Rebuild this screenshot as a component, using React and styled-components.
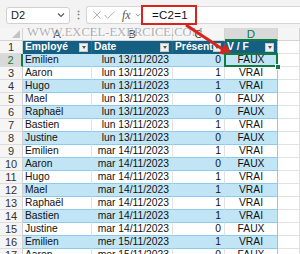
import React from 'react';
import styled, { createGlobalStyle } from 'styled-components';

const Global = createGlobalStyle`
  html, body { margin: 0; padding: 0; background: #fff; overflow: hidden; }
  #root { width: 300px; height: 254px; }
`;

const Frame = styled.div`
  position: relative;
  width: 300px;
  height: 254px;
  overflow: hidden;
  background: #fff;
  font-family: "Liberation Sans", Arial, sans-serif;
`;

const Bar = styled.div`
  display: flex;
  align-items: center;
  box-sizing: border-box;
  height: 28px;
  padding: 2px 0 0 6px;
  background: #f3f3f3;
`;

const NameBox = styled.div`
  box-sizing: border-box;
  width: 64px;
  height: 17px;
  display: flex;
  align-items: center;
  justify-content: space-between;
  padding: 0 4px 0 4px;
  background: #fff;
  border: 1px solid #d0d0d0;
  border-radius: 3px;
  font-size: 11px;
  color: #222;
`;

const Dots = styled.div`
  width: 16px;
  text-align: center;
  color: #7a7a7a;
  font-size: 11px;
  line-height: 11px;
  font-weight: bold;
`;

const FormulaBox = styled.div`
  flex: 1;
  box-sizing: border-box;
  height: 18px;
  display: flex;
  align-items: center;
  padding-left: 5px;
  background: #fff;
  border: 1px solid #d6d6d6;
  border-right: none;
  border-radius: 3px 0 0 3px;
`;

const IconSlot = styled.span`
  display: inline-flex;
  align-items: center;
  justify-content: center;
  width: ${p => p.$w}px;
`;

const Fx = styled.span`
  font-family: "Liberation Serif", "Times New Roman", serif;
  font-style: italic;
  font-size: 12px;
  color: #555;
  width: 12px;
`;

const FormulaText = styled.span`
  margin-left: 11px;
  font-size: 11.5px;
  color: #111;
  letter-spacing: 0.3px;
`;

const Sheet = styled.div`
  display: grid;
  grid-template-columns: 23px 69px 81px 52px 53px 22px;
  grid-auto-rows: 13px;
`;

const Corner = styled.div`
  position: relative;
  box-sizing: border-box;
  background: #f5f5f5;
  border-right: 1px solid #d4d4d4;
  border-bottom: 1px solid #d4d4d4;
  &::after {
    content: '';
    position: absolute;
    right: 2px;
    bottom: 2px;
    border-style: solid;
    border-width: 0 0 8px 8px;
    border-color: transparent transparent #c4c4c4 transparent;
  }
`;

const ColHead = styled.div`
  box-sizing: border-box;
  display: flex;
  align-items: center;
  justify-content: center;
  background: ${p => (p.$sel ? '#d9d9d9' : '#f5f5f5')};
  border-right: 1px solid #d4d4d4;
  border-bottom: ${p => (p.$sel ? '2px solid #107c41' : '1px solid #d4d4d4')};
  color: ${p => (p.$sel ? '#107c41' : '#444')};
  font-size: 11.5px;
  line-height: 12px;
`;

const RowHead = styled.div`
  box-sizing: border-box;
  display: flex;
  align-items: center;
  justify-content: center;
  background: ${p => (p.$sel ? '#d9d9d9' : '#f5f5f5')};
  border-right: ${p => (p.$sel ? '2px solid #107c41' : '1px solid #d0d0d0')};
  border-bottom: 1px solid #dcdcdc;
  color: ${p => (p.$sel ? '#107c41' : '#333')};
  font-size: 11px;
  line-height: 12px;
`;

const HeadCell = styled.div`
  box-sizing: border-box;
  display: flex;
  align-items: center;
  justify-content: space-between;
  padding: 0 3px 0 2px;
  background: #156082;
  border-right: 1px solid ${p => (p.$edge ? '#8ccbeb' : '#2a6f90')};
  border-bottom: 1px solid #156082;
  color: #fff;
  font-weight: bold;
  font-size: 10.3px;
  line-height: 12px;
  white-space: nowrap;
`;

const FilterBtn = styled.span`
  box-sizing: border-box;
  width: 9px;
  height: 9px;
  display: inline-flex;
  align-items: center;
  justify-content: center;
  background: #f0f0f0;
  border: 1px solid #c8c8c8;
  &::after {
    content: '';
    border-style: solid;
    border-width: 3px 2.5px 0 2.5px;
    border-color: #555 transparent transparent transparent;
  }
`;

const Cell = styled.div`
  position: relative;
  box-sizing: border-box;
  display: flex;
  align-items: center;
  justify-content: ${p =>
    p.$align === 'right' ? 'flex-end' : p.$align === 'center' ? 'center' : 'flex-start'};
  padding: 0 ${p => (p.$align === 'right' ? '3px' : '2px')} 0 2px;
  background: ${p => (p.$band ? '#c2e5f5' : '#fff')};
  border-bottom: 1px solid #8ccbeb;
  border-right: 1px solid
    ${p => (p.$edge ? '#8ccbeb' : p.$band ? '#c2e5f5' : '#e2e2e2')};
  color: #111;
  font-size: 10.3px;
  line-height: 12px;
  white-space: nowrap;
  z-index: ${p => (p.$sel ? 2 : 'auto')};
  ${p =>
    p.$sel &&
    `
    &::before {
      content: '';
      position: absolute;
      left: -1px; top: -1px; right: -1px; bottom: -1px;
      border: 2px solid #107c41;
    }
    &::after {
      content: '';
      position: absolute;
      right: -4px; bottom: -4px;
      width: 4px; height: 4px;
      background: #107c41;
      border: 1px solid #fff;
    }
  `}
`;

const EmptyCell = styled.div`
  box-sizing: border-box;
  background: #fff;
  border-bottom: 1px solid #e2e2e2;
  border-right: 1px solid #e2e2e2;
`;

const Watermark = styled.div`
  position: absolute;
  left: 27px;
  top: 26px;
  font-family: "Liberation Serif", "Times New Roman", serif;
  font-size: 12.6px;
  line-height: 13px;
  color: rgba(125, 125, 125, 0.6);
  text-shadow: 1px 1px 0 rgba(255, 255, 255, 0.7);
  white-space: nowrap;
  pointer-events: none;
`;

const Annot = styled.svg`
  position: absolute;
  left: 0;
  top: 0;
  pointer-events: none;
`;

const rows = [
  ['Emilien', 'lun 13/11/2023', 0],
  ['Aaron', 'lun 13/11/2023', 1],
  ['Hugo', 'lun 13/11/2023', 1],
  ['Mael', 'lun 13/11/2023', 0],
  ['Raphaël', 'lun 13/11/2023', 0],
  ['Bastien', 'lun 13/11/2023', 1],
  ['Justine', 'lun 13/11/2023', 0],
  ['Emilien', 'mar 14/11/2023', 1],
  ['Aaron', 'mar 14/11/2023', 0],
  ['Hugo', 'mar 14/11/2023', 1],
  ['Mael', 'mar 14/11/2023', 1],
  ['Raphaël', 'mar 14/11/2023', 1],
  ['Bastien', 'mar 14/11/2023', 1],
  ['Justine', 'mar 14/11/2023', 0],
  ['Emilien', 'mer 15/11/2023', 1],
  ['Aaron', 'mer 15/11/2023', 0],
];

const Chevron = ({ size = 8, color = '#555' }) => (
  <svg width={size} height={size} viewBox="0 0 8 8">
    <path d="M1 2.5 L4 5.5 L7 2.5" fill="none" stroke={color} strokeWidth="1.1" />
  </svg>
);

export default function App() {
  return (
    <Frame>
      <Global />
      <Bar>
        <NameBox>
          <span>D2</span>
          <Chevron />
        </NameBox>
        <Dots>⋮</Dots>
        <FormulaBox>
          <IconSlot $w={10}>
            <svg width="8" height="8" viewBox="0 0 8 8">
              <path d="M0.5 0.5 L7.5 7.5 M7.5 0.5 L0.5 7.5" stroke="#b4b4b4" strokeWidth="1" />
            </svg>
          </IconSlot>
          <IconSlot $w={14}>
            <svg width="11" height="8" viewBox="0 0 11 8">
              <path d="M0.5 4 L3.8 7.3 L10.5 0.6" fill="none" stroke="#b4b4b4" strokeWidth="1" />
            </svg>
          </IconSlot>
          <IconSlot $w={6} />
          <Fx>fx</Fx>
          <IconSlot $w={7}>
            <Chevron size={6} color="#888" />
          </IconSlot>
          <FormulaText>=C2=1</FormulaText>
        </FormulaBox>
      </Bar>
      <Sheet>
        <Corner />
        <ColHead>A</ColHead>
        <ColHead>B</ColHead>
        <ColHead>C</ColHead>
        <ColHead $sel>D</ColHead>
        <ColHead />

        <RowHead>1</RowHead>
        <HeadCell>
          Employé
          <FilterBtn />
        </HeadCell>
        <HeadCell>
          Date
          <FilterBtn />
        </HeadCell>
        <HeadCell>
          Présent
          <FilterBtn />
        </HeadCell>
        <HeadCell $edge>
          V / F
          <FilterBtn />
        </HeadCell>
        <EmptyCell />

        {rows.map(([name, date, p], i) => {
          const n = i + 2;
          const band = n % 2 === 0;
          return (
            <React.Fragment key={n}>
              <RowHead $sel={n === 2}>{n}</RowHead>
              <Cell $band={band}>{name}</Cell>
              <Cell $band={band} $align="right">{date}</Cell>
              <Cell $band={band} $align="right">{p}</Cell>
              <Cell $band={band} $align="center" $edge $sel={n === 2}>
                {p ? 'VRAI' : 'FAUX'}
              </Cell>
              <EmptyCell />
            </React.Fragment>
          );
        })}
      </Sheet>
      <Watermark>WWW.EXCEL-EXERCICE.COM</Watermark>
      <Annot width="300" height="254" viewBox="0 0 300 254">
        <rect x="142" y="6" width="54" height="18" fill="none" stroke="#d8241c" strokeWidth="2" />
        <line x1="186" y1="25" x2="223" y2="49.5" stroke="#d8241c" strokeWidth="3" />
        <polygon points="233,56 218.8,53.8 225.4,43.8" fill="#d8241c" />
      </Annot>
    </Frame>
  );
}
